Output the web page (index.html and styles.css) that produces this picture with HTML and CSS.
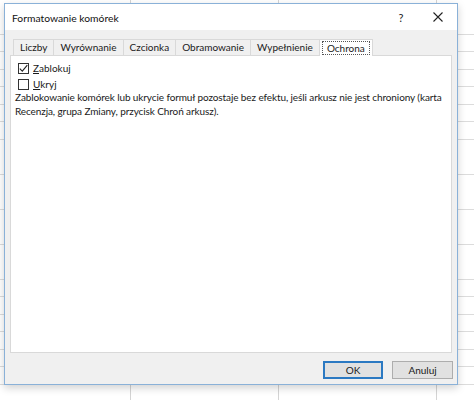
FILE: index.html
```html
<!DOCTYPE html>
<html lang="pl">
<head>
<meta charset="utf-8">
<title>Formatowanie komórek</title>
<link rel="stylesheet" href="styles.css">
</head>
<body>
<div class="sheet">
  <div class="dialog">
    <div class="titlebar">
      <span class="title">Formatowanie komórek</span>
      <span class="help">?</span>
      <span class="close">
        <svg width="10" height="10" viewBox="0 0 10 10"><path d="M0.5 0.5 L9.5 9.5 M9.5 0.5 L0.5 9.5" stroke="#222" stroke-width="1.1" fill="none"/></svg>
      </span>
    </div>
    <div class="content">
      <div class="tabs">
        <div class="tab">Liczby</div>
        <div class="tab">Wyrównanie</div>
        <div class="tab">Czcionka</div>
        <div class="tab">Obramowanie</div>
        <div class="tab">Wypełnienie</div>
        <div class="tab active"><span class="focus">Ochrona</span></div>
      </div>
      <div class="panel">
        <label class="check">
          <span class="box checked">
            <svg width="9" height="9" viewBox="0 0 9 9"><path d="M0.8 4.6 L3.3 7.1 L8.3 1.2" stroke="#222" stroke-width="1.1" fill="none"/></svg>
          </span>
          <span><u>Z</u>ablokuj</span>
        </label>
        <label class="check">
          <span class="box"></span>
          <span><u>U</u>kryj</span>
        </label>
        <p class="note">Zablokowanie komórek lub ukrycie formuł pozostaje bez efektu, jeśli arkusz nie jest chroniony (karta Recenzja, grupa Zmiany, przycisk Chroń arkusz).</p>
      </div>
      <div class="buttons">
        <button class="btn default">OK</button>
        <button class="btn">Anuluj</button>
      </div>
    </div>
  </div>
</div>
</body>
</html>
```
FILE: styles.css
```css
html, body {
  margin: 0;
  padding: 0;
}
body {
  width: 474px;
  height: 400px;
  overflow: hidden;
  font-family: Lato, "Open Sans", sans-serif;
  font-size: 10px;
  color: #1a1a1a;
  background-color: #fff;
  background-image:
    linear-gradient(#d4d4d4, #d4d4d4),
    linear-gradient(#d4d4d4, #d4d4d4),
    linear-gradient(#d4d4d4, #d4d4d4),
    repeating-linear-gradient(to bottom, transparent 0, transparent 16.5px, #dcdcdc 16.5px, #dcdcdc 17.5px);
  background-size: 1px 100%, 1px 100%, 1px 100%, 100% 100%;
  background-position: 130px 0, 278px 0, 436px 0, 0 0;
  background-repeat: no-repeat;
}
.sheet {
  padding: 3px 0 0 4px;
}
.dialog {
  width: 452px;
  height: 380px;
  border: 1px solid #8ab1d8;
  background: #f0f0f0;
  box-shadow: 0 3px 8px rgba(0,0,0,0.18);
  display: flex;
  flex-direction: column;
}
.titlebar {
  height: 26px;
  background: #fff;
  display: flex;
  align-items: center;
  padding: 0 0 0 7px;
  flex: none;
}
.title {
  flex: 1;
  font-size: 10.3px;
  color: #111;
  padding-top: 1px;
}
.help {
  width: 20px;
  font-size: 11px;
  color: #222;
  margin-right: 22px;
  text-align: center;
}
.close {
  width: 10px;
  margin-right: 14px;
  display: flex;
}
.content {
  flex: 1;
  display: flex;
  flex-direction: column;
  padding: 8px 4px 0 5px;
}
.tabs {
  display: flex;
  padding-left: 3px;
  height: 17px;
  align-items: flex-end;
}
.tab {
  height: 16px;
  line-height: 15px;
  box-sizing: border-box;
  border: 1px solid #d9d9d9;
  border-bottom: none;
  border-left: none;
  padding: 0 6px;
  background: #f0f0f0;
  color: #1a1a1a;
  white-space: nowrap;
}
.tab:first-child {
  border-left: 1px solid #d9d9d9;
}
.tab.active {
  height: 17px;
  background: #fff;
  border-left: 1px solid #d9d9d9;
  margin-left: -1px;
  padding: 1px 2px 0;
  margin-bottom: -1px;
  position: relative;
  z-index: 1;
}
.focus {
  display: block;
  border: 1px dotted #555;
  padding: 0 4px;
  line-height: 12px;
}
.panel {
  width: 442px;
  height: 298px;
  box-sizing: border-box;
  background: #fff;
  border: 1px solid #d9d9d9;
  padding: 4px 1px 0 4px;
}
.check {
  display: flex;
  align-items: center;
  height: 16px;
  padding-left: 3px;
}
.box {
  width: 11px;
  height: 11px;
  box-sizing: border-box;
  border: 1px solid #333;
  background: #fff;
  margin-right: 4px;
  display: flex;
  align-items: center;
  justify-content: center;
}
.note {
  margin: -2px 0 0 0;
  line-height: 14px;
  letter-spacing: -0.1px;
}
.buttons {
  display: flex;
  justify-content: flex-end;
  gap: 9px;
  padding: 8px 0 0 0;
}
.btn {
  width: 61px;
  height: 18px;
  box-sizing: border-box;
  font-family: inherit;
  font-size: 10px;
  color: #1a1a1a;
  background: #e1e1e1;
  border: 1px solid #adadad;
  padding: 0;
  margin: 0;
}
.btn.default {
  width: 60px;
  border: 2px solid #2b79c2;
}
```
